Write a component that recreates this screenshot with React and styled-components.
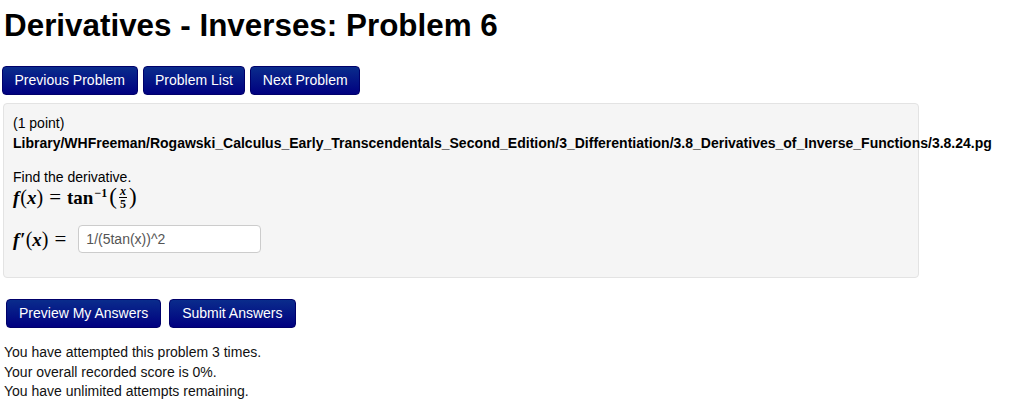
import React from "react";
import styled, { createGlobalStyle } from "styled-components";

const Global = createGlobalStyle`
  html, body { margin: 0; padding: 0; background: #fff; }
  body { font-family: "Liberation Sans", Arial, sans-serif; font-size: 14px; color: #000; }
`;

const Page = styled.div`
  padding: 0 2px;
`;

const Title = styled.h1`
  margin: 0;
  padding: 8px 0 0 2px;
  font-size: 31.4px;
  line-height: 36px;
  font-weight: bold;
  font-family: "Liberation Sans", Arial, sans-serif;
`;

const NavBar = styled.div`
  display: flex;
  gap: 5px;
  margin-top: 22px;
`;

const Button = styled.button`
  font-family: "Liberation Sans", Arial, sans-serif;
  font-size: 14px;
  line-height: 19px;
  color: #fff;
  padding: 4px ${(p) => (p.$tight ? "11.5px" : "12px")};
  border: 1px solid #00006a;
  border-radius: 4px;
  background: linear-gradient(to bottom, #0a2c8c 0%, #000080 100%);
  cursor: pointer;
  white-space: nowrap;
`;

const Panel = styled.div`
  margin: 8px 0 0 1px;
  width: 916px;
  box-sizing: border-box;
  background: #f5f5f5;
  border: 1px solid #e3e3e3;
  border-radius: 4px;
  padding: 9px 9px 24px;
  line-height: 20px;
`;

const Line = styled.div`
  white-space: nowrap;
  font-weight: ${(p) => (p.$bold ? "bold" : "normal")};
`;

const Gap = styled.div`
  height: ${(p) => p.$h}px;
`;

const MathLine = styled.div`
  font-family: "Liberation Serif", "Times New Roman", serif;
  font-size: 19px;
  font-weight: bold;
  line-height: 20px;
  height: 20px;
  white-space: nowrap;
`;

const MathInline = styled.span`
  font-family: "Liberation Serif", "Times New Roman", serif;
  font-size: 19px;
  font-weight: bold;
  white-space: nowrap;
`;

const I = styled.i`
  font-style: italic;
  margin-right: ${(p) => p.$mr || "0"};
`;

const Op = styled.span`
  margin: 0 6px;
  font-weight: normal;
  font-size: 21px;
`;

const Sup = styled.sup`
  font-size: 12px;
  line-height: 0;
  vertical-align: 7px;
  margin: 0 2px 0 1px;
`;

const Paren = styled.span`
  font-weight: normal;
  font-size: ${(p) => (p.$big ? "23px" : "20px")};
`;

const Frac = styled.span`
  display: inline-flex;
  flex-direction: column;
  align-items: center;
  vertical-align: middle;
  font-size: 12px;
  line-height: 10px;
  margin: -4px 2px 0;
  & > span:first-child {
    border-bottom: 1px solid #000;
    padding: 0 1px 1px;
    font-style: italic;
  }
  & > span:last-child { padding-top: 1px; }
`;

const AnswerRow = styled.div`
  display: flex;
  align-items: center;
  margin-top: 18px;
  gap: 6px;
`;

const Input = styled.input`
  width: 183px;
  height: 28px;
  box-sizing: border-box;
  border: 1px solid #ccc;
  border-radius: 4px;
  background: #fff;
  color: #555;
  font-family: "Liberation Sans", Arial, sans-serif;
  font-size: 14px;
  padding: 0 7px;
  outline: none;
`;

const SubmitBar = styled.div`
  display: flex;
  gap: 8px;
  margin: 21px 0 0 4px;
`;

const Status = styled.div`
  margin: 15px 0 0 2px;
  line-height: 19.5px;
  color: #111;
`;

export default function App() {
  return (
    <Page>
      <Global />
      <Title>Derivatives - Inverses: Problem 6</Title>
      <NavBar>
        <Button $tight>Previous Problem</Button>
        <Button $tight>Problem List</Button>
        <Button $tight>Next Problem</Button>
      </NavBar>
      <Panel>
        <Line>(1 point)</Line>
        <Line $bold>
          Library/WHFreeman/Rogawski_Calculus_Early_Transcendentals_Second_Edition/3_Differentiation/3.8_Derivatives_of_Inverse_Functions/3.8.24.pg
        </Line>
        <Gap $h={14} />
        <Line>Find the derivative.</Line>
        <MathLine>
          <I $mr="1px">f</I>
          <Paren>(</Paren>
          <I>x</I>
          <Paren>)</Paren>
          <Op>=</Op>
          <span>tan</span>
          <Sup>−1</Sup>
          <Paren $big>(</Paren>
          <Frac>
            <span>x</span>
            <span>5</span>
          </Frac>
          <Paren $big>)</Paren>
        </MathLine>
        <AnswerRow>
          <MathInline>
            <I $mr="1px">f</I>
            <span>′</span>
            <Paren>(</Paren>
            <I>x</I>
            <Paren>)</Paren>
            <Op>=</Op>
          </MathInline>
          <Input defaultValue="1/(5tan(x))^2" />
        </AnswerRow>
      </Panel>
      <SubmitBar>
        <Button>Preview My Answers</Button>
        <Button>Submit Answers</Button>
      </SubmitBar>
      <Status>
        <div>You have attempted this problem 3 times.</div>
        <div>Your overall recorded score is 0%.</div>
        <div>You have unlimited attempts remaining.</div>
      </Status>
    </Page>
  );
}
